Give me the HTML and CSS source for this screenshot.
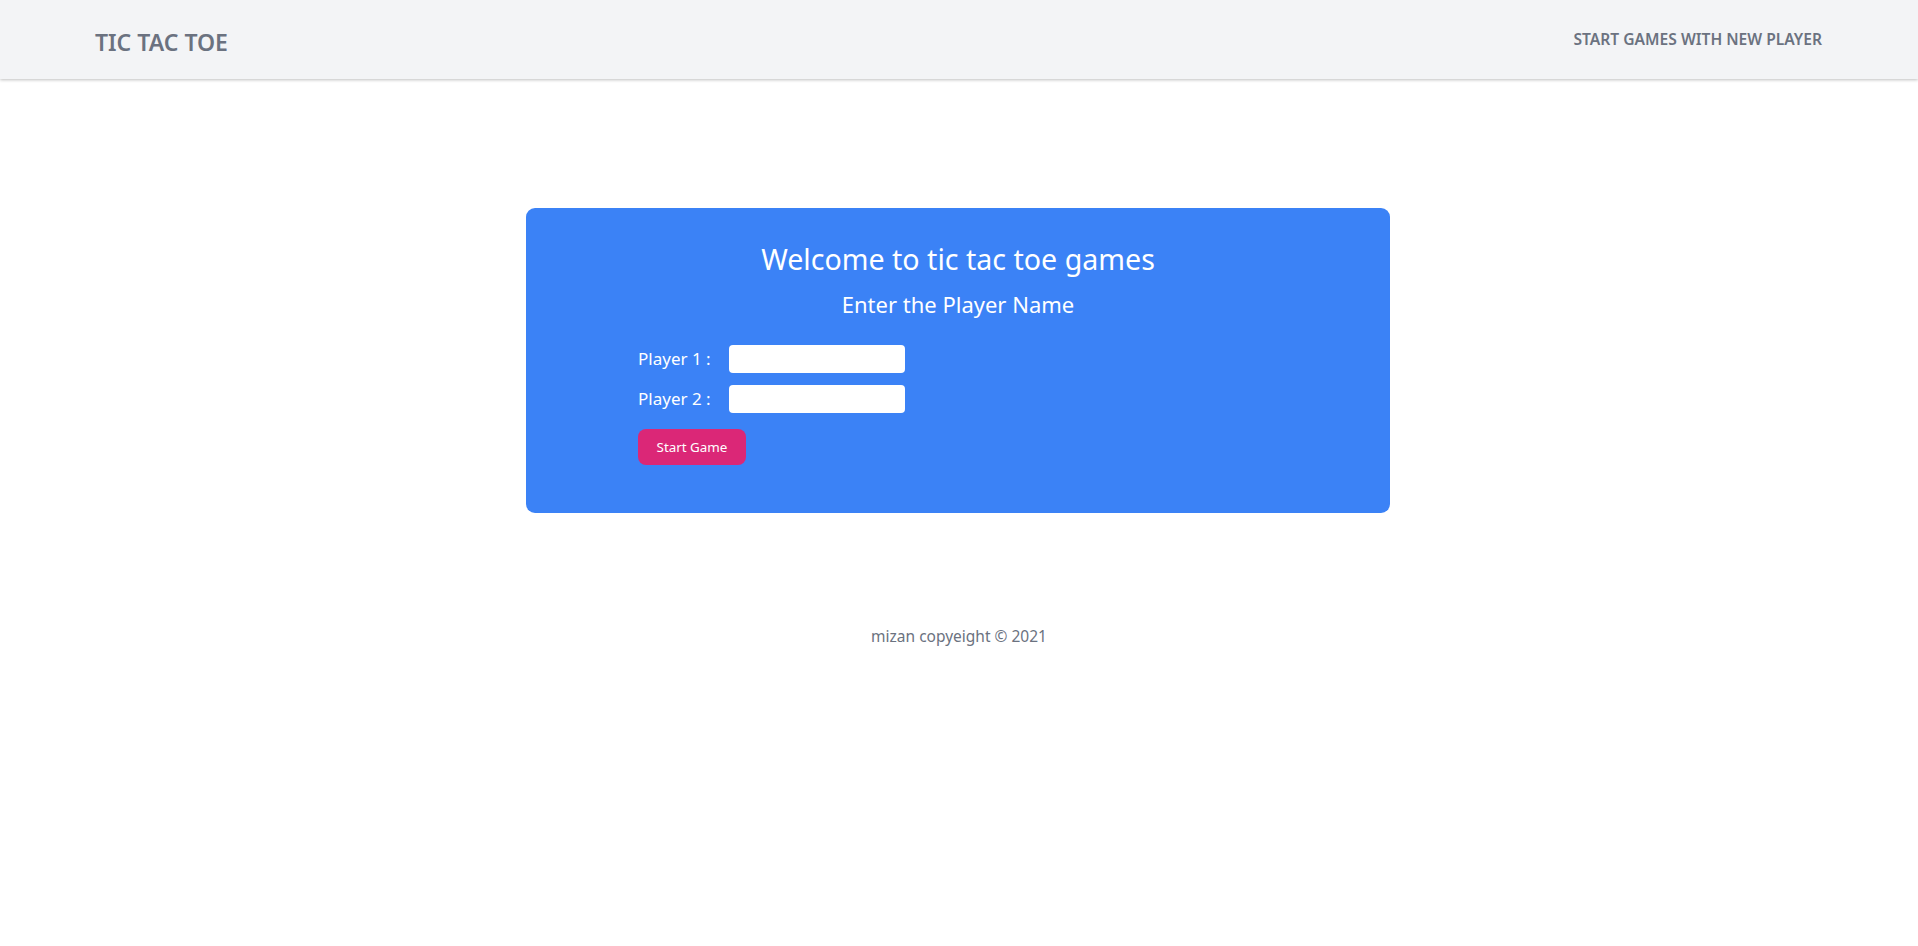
FILE: index.html
```html
<!DOCTYPE html>
<html lang="en">
<head>
<meta charset="utf-8">
<title>Tic Tac Toe</title>
<link rel="stylesheet" href="styles.css">
</head>
<body>
<header class="navbar">
  <a class="brand" href="#">TIC TAC TOE</a>
  <a class="nav-link" href="#">START GAMES WITH NEW PLAYER</a>
</header>
<main class="main">
  <section class="card">
    <h1 class="card-title">Welcome to tic tac toe games</h1>
    <h2 class="card-subtitle">Enter the Player Name</h2>
    <form class="player-form">
      <div class="field">
        <label class="field-label" for="p1">Player 1 :</label>
        <input class="field-input" id="p1" type="text">
      </div>
      <div class="field">
        <label class="field-label" for="p2">Player 2 :</label>
        <input class="field-input" id="p2" type="text">
      </div>
      <button class="start-btn" type="button">Start Game</button>
    </form>
  </section>
</main>
<footer class="footer">mizan copyeight © 2021</footer>
</body>
</html>
```

FILE: styles.css
```css
* { box-sizing: border-box; }
html, body { margin: 0; padding: 0; }
body {
  font-family: "Noto Sans", "Open Sans", sans-serif;
  background: #ffffff;
  color: #6b7280;
}
.navbar {
  height: 79px;
  background: #f3f4f6;
  box-shadow: 0 1px 3px rgba(0,0,0,0.25);
  display: flex;
  align-items: center;
  justify-content: space-between;
  padding: 0 96px 0 95px;
}
.brand {
  font-size: 23px;
  font-weight: 600;
  color: #6b7280;
  text-decoration: none;
  line-height: 30px;
  padding-top: 5px;
}
.nav-link {
  font-size: 15.6px;
  font-weight: 600;
  color: #6b7280;
  text-decoration: none;
  line-height: 24px;
  padding-bottom: 2px;
}
.main {
  display: flex;
  justify-content: center;
  padding-top: 129px;
  padding-right: 2px;
}
.card {
  width: 864px;
  height: 305px;
  background: #3b82f6;
  border-radius: 9px;
  color: #ffffff;
  padding: 31px 112px 0;
}
.card-title {
  margin: 0;
  text-align: center;
  font-size: 28.6px;
  font-weight: 400;
  line-height: 40px;
}
.card-subtitle {
  margin: 9px 0 0;
  text-align: center;
  font-size: 22px;
  font-weight: 400;
  line-height: 32px;
}
.player-form {
  margin-top: 25px;
  display: flex;
  flex-direction: column;
  align-items: flex-start;
}
.field {
  display: flex;
  align-items: center;
  margin-bottom: 12px;
}
.field-label {
  width: 91px;
  font-size: 17px;
  line-height: 28px;
}
.field-input {
  width: 176px;
  height: 28px;
  border: none;
  border-radius: 4px;
  background: #ffffff;
  padding: 0 8px;
  font-family: inherit;
}
.start-btn {
  margin-top: 4px;
  width: 108px;
  height: 36px;
  border: none;
  border-radius: 8px;
  background: #db2777;
  color: #ffffff;
  font-family: inherit;
  font-size: 13.4px;
  cursor: pointer;
}
.footer {
  margin-top: 112px;
  text-align: center;
  font-size: 15.5px;
  color: #6b7280;
}
```
